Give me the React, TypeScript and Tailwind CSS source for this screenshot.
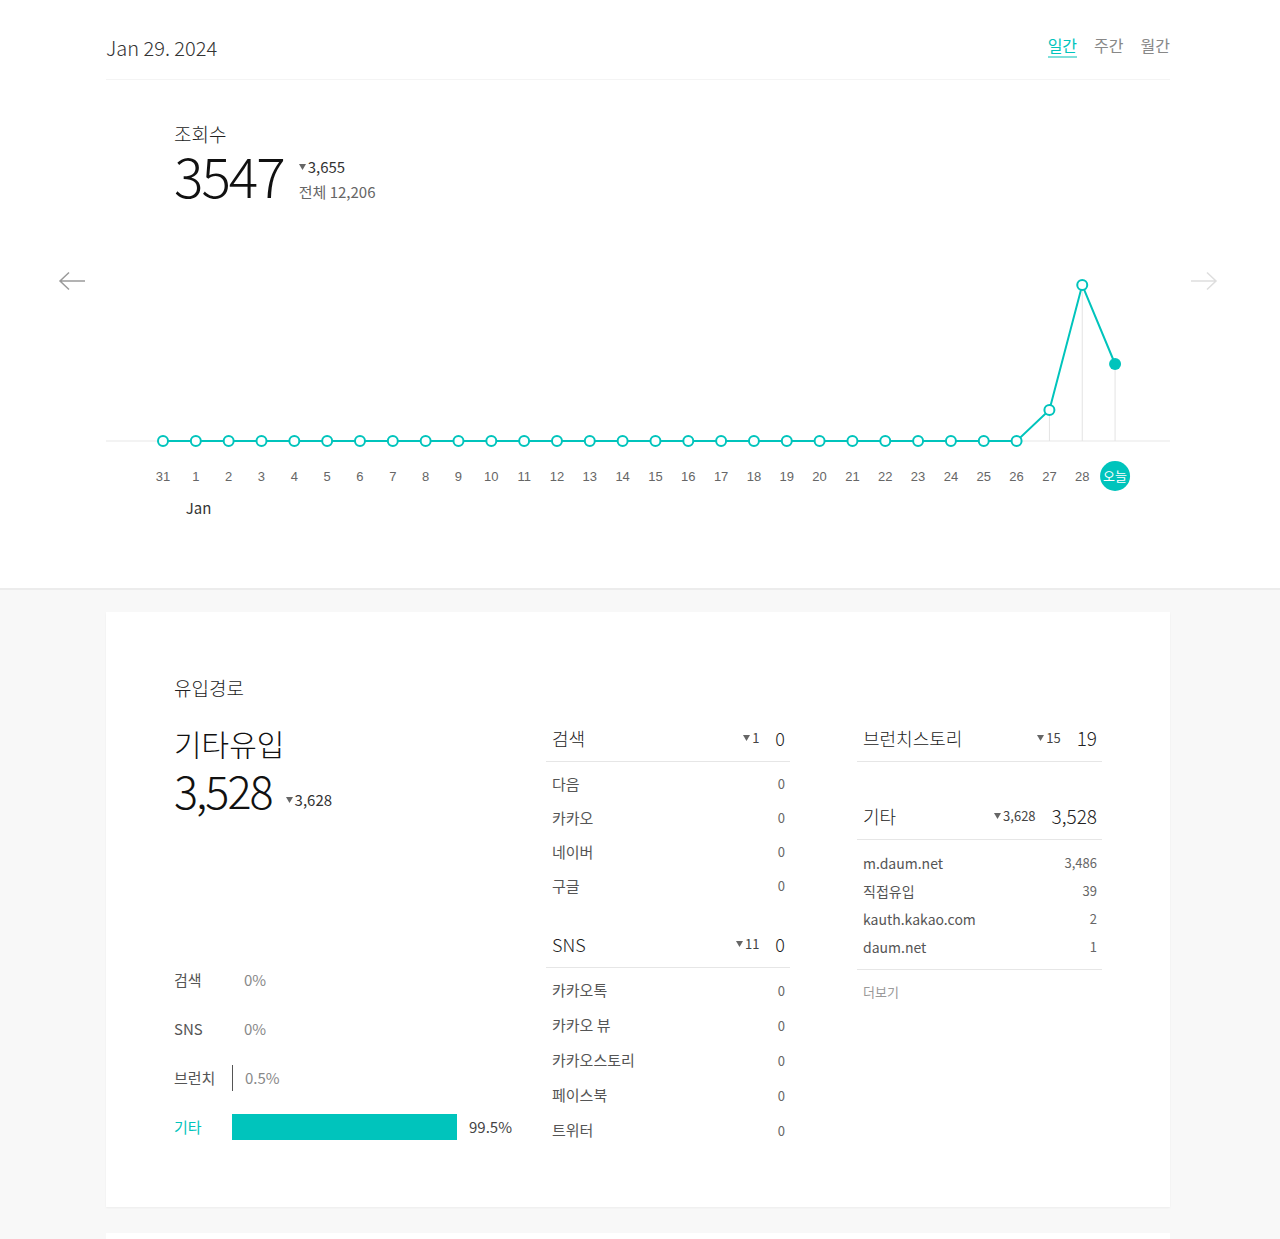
import React from 'react';

const TEAL = '#00c4bc';

const font = { fontFamily: '"Noto Sans CJK KR", "Noto Sans", sans-serif' };

const days = ['31', '1', '2', '3', '4', '5', '6', '7', '8', '9', '10', '11', '12', '13', '14', '15', '16', '17', '18', '19', '20', '21', '22', '23', '24', '25', '26', '27', '28'];
// y in chart coords (baseline 191)
const values = days.map((d) => (d === '27' ? 160 : d === '28' ? 35 : 191));

function Tri() {
  return (
    <svg width="7" height="6" viewBox="0 0 7 6" className="inline-block mr-[2px]">
      <path d="M0 0H7L3.5 6Z" fill="#666" />
    </svg>
  );
}

function Arrow({ dir, color }: { dir: 'left' | 'right'; color: string }) {
  return (
    <svg width="28" height="20" viewBox="0 0 28 20" fill="none" stroke={color} strokeWidth="1.5">
      {dir === 'left' ? <path d="M27 10H2M11 1.5L2 10L11 18.5" /> : <path d="M1 10H26M17 1.5L26 10L17 18.5" />}
    </svg>
  );
}

function Chart() {
  const x = (i: number) => 57 + i * 32.83;
  const todayX = x(29);
  const todayY = 114;
  const pts = values.map((v, i) => `${x(i)},${v}`).join(' ') + ` ${todayX},${todayY}`;
  return (
    <svg width="1064" height="280" viewBox="0 0 1064 280" className="block">
      <line x1="0" y1="191" x2="1064" y2="191" stroke="#efefef" strokeWidth="1.5" />
      {[27, 28].map((i) => (
        <line key={i} x1={x(i)} y1={values[i]} x2={x(i)} y2="191" stroke="#e3e3e3" strokeWidth="1" />
      ))}
      <line x1={todayX} y1={todayY} x2={todayX} y2="191" stroke="#e3e3e3" strokeWidth="1" />
      <polyline points={pts} fill="none" stroke={TEAL} strokeWidth="2" />
      {values.map((v, i) => (
        <circle key={i} cx={x(i)} cy={v} r="5" fill="#fff" stroke={TEAL} strokeWidth="2" />
      ))}
      <circle cx={todayX} cy={todayY} r="6" fill={TEAL} />
      {days.map((d, i) => (
        <text key={d} x={x(i)} y="231" textAnchor="middle" fontSize="13" fill="#666" fontFamily='"Liberation Sans", Arial, sans-serif'>
          {d}
        </text>
      ))}
      <circle cx={todayX} cy="226" r="15" fill={TEAL} />
      <text x={todayX} y="231" textAnchor="middle" fontSize="13" fill="#fff" fontFamily='"Noto Sans CJK KR", sans-serif'>
        오늘
      </text>
      <text x="92.5" y="264" textAnchor="middle" fontSize="15" fill="#333" fontFamily='"Noto Sans CJK KR", sans-serif'>
        Jan
      </text>
    </svg>
  );
}

function Group({ title, diff, total, rows, rowH, rowClass, big }: { title: string; diff: string; total: string; rows: [string, string][]; rowH: string; rowClass: string; big?: boolean }) {
  return (
    <div>
      <div className="h-[47px] flex items-center justify-between pl-[6px] pr-[5px] border-b border-[#e6e6e6]">
        <span className="text-[18px] font-light text-[#222]">{title}</span>
        <span className="flex items-center gap-[16px]">
          <span className="text-[13px] text-[#444] flex items-center">
            <Tri />
            {diff}
          </span>
          <span className={`${big ? 'text-[19px]' : 'text-[18px]'} font-light text-[#222]`}>{total}</span>
        </span>
      </div>
      {rows.length > 0 && (
        <div className={rowClass}>
          {rows.map(([k, v]) => (
            <div key={k} className={`${rowH} flex items-center justify-between pl-[6px] pr-[5px]`}>
              <span className="text-[#555]">{k}</span>
              <span className="text-[13px] text-[#666]">{v}</span>
            </div>
          ))}
        </div>
      )}
    </div>
  );
}

function BarRow({ label, pct, width, line, active }: { label: string; pct: string; width?: number; line?: boolean; active?: boolean }) {
  return (
    <div className="h-[26px] flex items-center text-[15px]">
      <span className={`w-[58px] ${active ? 'text-[#00c4bc]' : 'text-[#555]'}`}>{label}</span>
      {line && <span className="w-px h-[26px] bg-[#555]" />}
      {width ? <span className="h-[26px] bg-[#00c4bc]" style={{ width }} /> : null}
      <span className={`ml-[12px] ${active ? 'text-[#444]' : 'text-[#888]'}`}>{pct}</span>
    </div>
  );
}

export default function App() {
  return (
    <div style={font} className="min-h-[1239px] bg-[#f8f8f8]">
      <div className="bg-white border-b-2 border-[#ececec]">
        <div className="w-[1064px] ml-[106px] pb-[58px]">
          <div className="h-[80px] flex items-end justify-between pb-[17px] border-b border-[#f4f4f4]">
            <span className="text-[20px] font-light text-[#333] leading-[28px]">Jan 29. 2024</span>
            <div className="flex items-center gap-[17px] text-[16px] text-[#888] pb-[4px]">
              <span className="text-[#00c4bc] border-b-2 border-[#7fe0db] leading-[22px]">일간</span>
              <span className="leading-[22px] border-b-2 border-transparent">주간</span>
              <span className="leading-[22px] border-b-2 border-transparent">월간</span>
            </div>
          </div>

          <div className="h-[170px] pt-[41px] pl-[68px]">
            <div className="text-[19px] leading-[26px] font-light text-[#222]">조회수</div>
            <div className="flex items-start">
              <div className="text-[55px] leading-[54px] font-light tracking-[-2px] text-[#111]">3547</div>
              <div className="ml-[15px] pt-[7px] text-[15px] leading-[25px]">
                <div className="text-[#333] flex items-center">
                  <Tri />
                  3,655
                </div>
                <div className="text-[#666]">전체 12,206</div>
              </div>
            </div>
          </div>

          <div className="relative">
            <div className="absolute left-[-48px] top-[21px]">
              <Arrow dir="left" color="#9a9a9a" />
            </div>
            <div className="absolute right-[-48px] top-[21px]">
              <Arrow dir="right" color="#dedede" />
            </div>
            <Chart />
          </div>
        </div>
      </div>

      <div className="w-[1064px] ml-[106px] pt-[22px]">
        <div className="bg-white h-[595px] pt-[62px] pl-[68px] shadow-[0_1px_2px_rgba(0,0,0,0.05)]">
          <div className="text-[19px] leading-[28px] font-light text-[#222]">유입경로</div>
          <div className="flex mt-[13px]">
            <div className="w-[372px]">
              <div className="mt-[10px] text-[30px] leading-[36px] font-light text-[#111]">기타유입</div>
              <div className="mt-[4px] flex items-start">
                <div className="text-[45px] leading-[50px] font-light tracking-[-2px] text-[#111]">3,528</div>
                <div className="ml-[14px] mt-[24px] leading-[22px] text-[15px] text-[#333] flex items-center">
                  <Tri />
                  3,628
                </div>
              </div>
              <div className="mt-[152px] flex flex-col gap-[23px]">
                <BarRow label="검색" pct="0%" />
                <BarRow label="SNS" pct="0%" />
                <BarRow label="브런치" pct="0.5%" line />
                <BarRow label="기타" pct="99.5%" width={225} active />
              </div>
            </div>

            <div className="w-[244px] text-[15px]">
              <Group
                title="검색"
                diff="1"
                total="0"
                rowH="h-[34px]"
                rowClass="pt-[5px]"
                rows={[
                  ['다음', '0'],
                  ['카카오', '0'],
                  ['네이버', '0'],
                  ['구글', '0'],
                ]}
              />
              <div className="mt-[18px]">
                <Group
                  title="SNS"
                  diff="11"
                  total="0"
                  rowH="h-[35px]"
                  rowClass="pt-[5px]"
                  rows={[
                    ['카카오톡', '0'],
                    ['카카오 뷰', '0'],
                    ['카카오스토리', '0'],
                    ['페이스북', '0'],
                    ['트위터', '0'],
                  ]}
                />
              </div>
            </div>

            <div className="w-[245px] ml-[67px] text-[14px]">
              <Group title="브런치스토리" diff="15" total="19" rowH="" rowClass="" rows={[]} big />
              <div className="mt-[31px]">
                <Group
                  title="기타"
                  diff="3,628"
                  total="3,528"
                  big
                  rowH="h-[28px]"
                  rowClass="pt-[9px] pb-[8px] border-b border-[#e6e6e6]"
                  rows={[
                    ['m.daum.net', '3,486'],
                    ['직접유입', '39'],
                    ['kauth.kakao.com', '2'],
                    ['daum.net', '1'],
                  ]}
                />
              </div>
              <div className="mt-[12px] pl-[6px] text-[13px] text-[#999]">더보기</div>
            </div>
          </div>
        </div>
        <div className="bg-white h-[40px] mt-[26px]" />
      </div>
    </div>
  );
}
